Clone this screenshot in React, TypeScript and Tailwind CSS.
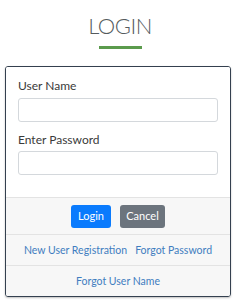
export default function App() {
  return (
    <div className="w-[240px] h-[300px] bg-white font-['Lato',sans-serif] overflow-hidden">
      <div className="flex flex-col items-center pt-[11px]">
        <h1 className="text-[22px] leading-[30px] font-light tracking-[-0.5px] text-[#555b5e]">LOGIN</h1>
        <div className="mt-[5px] h-[3px] w-[43px] bg-[#5b9b4d]" />
      </div>

      <div className="ml-[5px] mr-[9px] mt-[17px] border border-[#34404f] rounded-[3px] shadow-[0_1px_2px_rgba(0,0,0,0.25)] overflow-hidden">
        <div className="pl-[12px] pr-[12px] pt-[11px] pb-[22px] bg-white">
          <label className="block text-[12px] leading-[16px] text-[#3a3a3a]">User Name</label>
          <input className="mt-[4px] block w-full h-[24px] border border-[#d4d8dc] rounded-[3px]" />
          <label className="block mt-[10px] text-[12px] leading-[16px] text-[#3a3a3a]">Enter Password</label>
          <input type="password" className="mt-[3px] block w-full h-[24px] border border-[#d4d8dc] rounded-[3px]" />
        </div>

        <div className="bg-[#f7f7f7] border-t border-[#e3e3e3]">
          <div className="flex justify-center gap-[9px] pt-[7px] pb-[6px]">
            <button className="h-[23px] w-[40px] rounded-[3px] bg-[#0a7bfd] text-white text-[11px]">Login</button>
            <button className="h-[23px] w-[45px] rounded-[3px] bg-[#6c747d] text-white text-[11px]">Cancel</button>
          </div>
          <div className="flex justify-center gap-[8px] border-t border-[#e3e3e3] h-[31px] pt-[1px] items-center text-[10.5px] text-[#3f7dc0]">
            <a>New User Registration</a>
            <a>Forgot Password</a>
          </div>
          <div className="flex justify-center border-t border-[#e3e3e3] h-[31px] pt-[2px] items-center text-[10.5px] text-[#3f7dc0]">
            <a>Forgot User Name</a>
          </div>
        </div>
      </div>
    </div>
  );
}
